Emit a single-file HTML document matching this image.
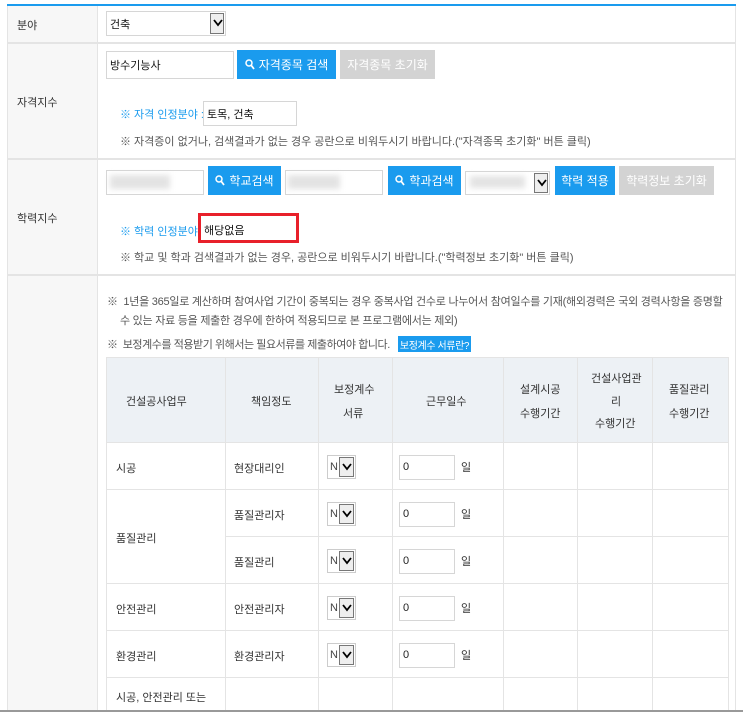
<!DOCTYPE html>
<html><head><meta charset="utf-8"><style>
*{margin:0;padding:0;box-sizing:border-box}
body{width:743px;height:712px;overflow:hidden;background:#fff;font-family:"Liberation Sans","Noto Sans CJK KR",sans-serif;font-size:11px;color:#333;position:relative}
.a{position:absolute}
.t{position:absolute;white-space:nowrap}
.inp{position:absolute;border:1px solid #d6d6d6;background:#fff;padding-left:3px;font-size:11px;color:#111;display:flex;align-items:center}
.btn{position:absolute;color:#fff;font-size:12px;display:flex;align-items:center;justify-content:center;white-space:nowrap;overflow:hidden}
.btn svg{margin-right:4px}
.blue{background:#1a9bee}.grey{background:#d3d3d3}
.hl{position:absolute;height:1px;background:#e4e4e4}
.vl{position:absolute;width:1px;background:#e4e4e4}
.sel{position:absolute;width:29px;height:24px;border:1px solid #ccc;background:#fff;font-size:11px;color:#444;padding-left:2px;line-height:22px}
.dd{position:absolute;right:1px;top:1px;width:15px;height:20px;border:1px solid #777;background:#eee}
.dd svg{position:absolute;left:2px;top:5px}
.num{position:absolute;width:56px;height:25px;border:1px solid #d6d6d6;font-size:11px;padding-left:3px;line-height:23px;color:#222}
</style></head><body>
<div class="a" style="left:7px;top:4px;width:729px;height:2px;background:#1a9bee"></div>
<div class="a" style="left:7px;top:6px;width:90px;height:706px;background:#f7f7f7"></div>
<div class="vl" style="left:7px;top:6px;height:706px"></div>
<div class="vl" style="left:97px;top:6px;height:706px"></div>
<div class="vl" style="left:735px;top:6px;height:706px"></div>
<div class="hl" style="left:7px;top:42px;width:729px;height:2px"></div>
<div class="hl" style="left:7px;top:158px;width:729px;height:2px"></div>
<div class="hl" style="left:7px;top:274px;width:729px;height:2px"></div>

<div class="t" style="left:17px;top:17px">분야</div>
<div class="t" style="left:17px;top:94px">자격지수</div>
<div class="t" style="left:17px;top:210px">학력지수</div>

<div class="inp" style="left:106px;top:11px;width:120px;height:25px">건축<div class="dd" style="width:14px;height:21px"><svg width="10" height="8" viewBox="0 0 10 8"><path d="M1 1 L5 6 L9 1" stroke="#000" stroke-width="1.8" fill="none"/></svg></div></div>

<div class="inp" style="left:106px;top:51px;width:128px;height:28px">방수기능사</div>
<div class="btn blue" style="left:237px;top:50px;width:99px;height:29px"><svg width="10" height="11" viewBox="0 0 10 11"><circle cx="4" cy="4" r="3" stroke="#fff" stroke-width="1.5" fill="none"/><path d="M6 6 L9 10" stroke="#fff" stroke-width="1.8"/></svg>자격종목 검색</div>
<div class="btn grey" style="left:340px;top:50px;width:95px;height:29px">자격종목 초기화</div>
<div class="t" style="left:120px;top:106px;color:#1a9bee">※ 자격 인정분야 :</div>
<div class="inp" style="left:203px;top:101px;width:94px;height:25px">토목, 건축</div>
<div class="t" style="left:120px;top:133px;color:#555">※ 자격증이 없거나, 검색결과가 없는 경우 공란으로 비워두시기 바랍니다.("자격종목 초기화" 버튼 클릭)</div>

<div class="inp" style="left:106px;top:170px;width:98px;height:25px;color:#bbb">&nbsp;</div>
<div class="a" style="left:110px;top:175px;width:60px;height:14px;background:#e3e3e3;filter:blur(3px)"></div>
<div class="btn blue" style="left:208px;top:166px;width:73px;height:29px"><svg width="10" height="11" viewBox="0 0 10 11"><circle cx="4" cy="4" r="3" stroke="#fff" stroke-width="1.5" fill="none"/><path d="M6 6 L9 10" stroke="#fff" stroke-width="1.8"/></svg>학교검색</div>
<div class="inp" style="left:285px;top:170px;width:98px;height:25px">&nbsp;</div>
<div class="a" style="left:288px;top:175px;width:52px;height:14px;background:#e3e3e3;filter:blur(3px)"></div>
<div class="btn blue" style="left:388px;top:166px;width:73px;height:29px"><svg width="10" height="11" viewBox="0 0 10 11"><circle cx="4" cy="4" r="3" stroke="#fff" stroke-width="1.5" fill="none"/><path d="M6 6 L9 10" stroke="#fff" stroke-width="1.8"/></svg>학과검색</div>
<div class="inp" style="left:465px;top:171px;width:85px;height:24px">&nbsp;<div class="dd" style="width:14px"><svg width="10" height="8" viewBox="0 0 10 8"><path d="M1 1 L5 6 L9 1" stroke="#000" stroke-width="1.8" fill="none"/></svg></div></div>
<div class="a" style="left:470px;top:176px;width:55px;height:12px;background:#e3e3e3;filter:blur(3px)"></div>
<div class="btn blue" style="left:555px;top:166px;width:60px;height:29px">학력 적용</div>
<div class="btn grey" style="left:619px;top:166px;width:95px;height:29px">학력정보 초기화</div>
<div class="t" style="left:120px;top:223px;color:#1a9bee">※ 학력 인정분야 :</div>
<div class="a" style="left:198px;top:213px;width:101px;height:30px;border:3px solid #e8202a;background:#fff"></div>
<div class="t" style="left:204px;top:222px;color:#111">해당없음</div>
<div class="t" style="left:120px;top:249px;color:#555">※ 학교 및 학과 검색결과가 없는 경우, 공란으로 비워두시기 바랍니다.("학력정보 초기화" 버튼 클릭)</div>

<div class="t" style="left:107px;top:293px;color:#555;letter-spacing:-0.25px">※&nbsp; 1년을 365일로 계산하며 참여사업 기간이 중복되는 경우 중복사업 건수로 나누어서 참여일수를 기재(해외경력은 국외 경력사항을 증명할</div>
<div class="t" style="left:120px;top:312px;color:#555;letter-spacing:-0.25px">수 있는 자료 등을 제출한 경우에 한하여 적용되므로 본 프로그램에서는 제외)</div>
<div class="t" style="left:107px;top:336px;color:#555;letter-spacing:-0.45px">※&nbsp; 보정계수를 적용받기 위해서는 필요서류를 제출하여야 합니다.</div>
<div class="btn blue" style="left:398px;top:336px;width:73px;height:16px;font-size:10px;letter-spacing:-0.4px">보정계수 서류란?</div>

<div class="a" style="left:106px;top:357px;width:623px;height:85px;background:#edf1f5"></div>
<div class="hl" style="left:106px;top:357px;width:623px"></div>
<div class="hl" style="left:106px;top:442px;width:623px"></div>
<div class="hl" style="left:106px;top:489px;width:623px"></div>
<div class="hl" style="left:225px;top:536px;width:504px"></div>
<div class="hl" style="left:106px;top:583px;width:623px"></div>
<div class="hl" style="left:106px;top:630px;width:623px"></div>
<div class="hl" style="left:106px;top:677px;width:623px"></div>
<div class="vl" style="left:106px;top:357px;height:355px"></div>
<div class="vl" style="left:225px;top:357px;height:355px"></div>
<div class="vl" style="left:318px;top:357px;height:355px"></div>
<div class="vl" style="left:392px;top:357px;height:355px"></div>
<div class="vl" style="left:503px;top:357px;height:355px"></div>
<div class="vl" style="left:577px;top:357px;height:355px"></div>
<div class="vl" style="left:652px;top:357px;height:355px"></div>
<div class="vl" style="left:728px;top:357px;height:355px"></div>
<div class="a" style="left:0;top:710px;width:743px;height:2px;background:#999"></div>

<div class="t" style="left:126px;top:393px">건설공사업무</div>
<div class="t" style="left:251px;top:393px">책임정도</div>
<div class="t" style="left:334px;top:381px">보정계수</div>
<div class="t" style="left:343px;top:405px">서류</div>
<div class="t" style="left:426px;top:393px">근무일수</div>
<div class="t" style="left:520px;top:381px">설계시공</div>
<div class="t" style="left:520px;top:405px">수행기간</div>
<div class="t" style="left:591px;top:370px">건설사업관</div>
<div class="t" style="left:611px;top:393px">리</div>
<div class="t" style="left:595px;top:415px">수행기간</div>
<div class="t" style="left:669px;top:381px">품질관리</div>
<div class="t" style="left:669px;top:405px">수행기간</div>

<div class="t" style="left:116px;top:460px">시공</div>
<div class="t" style="left:116px;top:530px">품질관리</div>
<div class="t" style="left:116px;top:601px">안전관리</div>
<div class="t" style="left:116px;top:648px">환경관리</div>
<div class="t" style="left:116px;top:689px">시공, 안전관리 또는</div>
<div class="t" style="left:234px;top:460px">현장대리인</div>
<div class="t" style="left:234px;top:507px">품질관리자</div>
<div class="t" style="left:234px;top:554px">품질관리</div>
<div class="t" style="left:234px;top:601px">안전관리자</div>
<div class="t" style="left:234px;top:648px">환경관리자</div>

<div class="sel" style="left:327px;top:455px">N<div class="dd"><svg width="10" height="8" viewBox="0 0 10 8"><path d="M1 1 L5 6 L9 1" stroke="#000" stroke-width="1.8" fill="none"/></svg></div></div>
<div class="sel" style="left:327px;top:502px">N<div class="dd"><svg width="10" height="8" viewBox="0 0 10 8"><path d="M1 1 L5 6 L9 1" stroke="#000" stroke-width="1.8" fill="none"/></svg></div></div>
<div class="sel" style="left:327px;top:549px">N<div class="dd"><svg width="10" height="8" viewBox="0 0 10 8"><path d="M1 1 L5 6 L9 1" stroke="#000" stroke-width="1.8" fill="none"/></svg></div></div>
<div class="sel" style="left:327px;top:596px">N<div class="dd"><svg width="10" height="8" viewBox="0 0 10 8"><path d="M1 1 L5 6 L9 1" stroke="#000" stroke-width="1.8" fill="none"/></svg></div></div>
<div class="sel" style="left:327px;top:643px">N<div class="dd"><svg width="10" height="8" viewBox="0 0 10 8"><path d="M1 1 L5 6 L9 1" stroke="#000" stroke-width="1.8" fill="none"/></svg></div></div>
<div class="num" style="left:399px;top:455px">0</div>
<div class="num" style="left:399px;top:502px">0</div>
<div class="num" style="left:399px;top:549px">0</div>
<div class="num" style="left:399px;top:596px">0</div>
<div class="num" style="left:399px;top:643px">0</div>
<div class="t" style="left:461px;top:459px">일</div>
<div class="t" style="left:461px;top:506px">일</div>
<div class="t" style="left:461px;top:553px">일</div>
<div class="t" style="left:461px;top:600px">일</div>
<div class="t" style="left:461px;top:647px">일</div>
</body></html>
